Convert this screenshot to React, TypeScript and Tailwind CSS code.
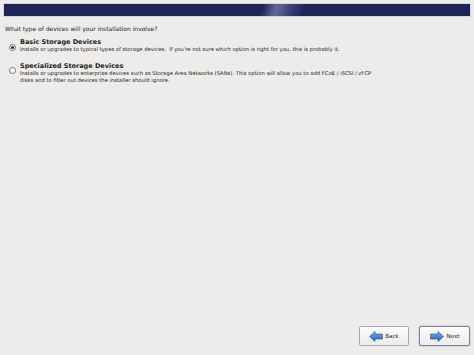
import React from "react";

const Arrow = ({ dir }: { dir: "left" | "right" }) => (
  <svg width="14" height="11" viewBox="0 0 14 11">
    <defs>
      <linearGradient id={"g" + dir} x1="0" y1="0" x2="0" y2="1">
        <stop offset="0" stopColor="#7fb2e8" />
        <stop offset="1" stopColor="#1f5fb0" />
      </linearGradient>
    </defs>
    {dir === "left" ? (
      <path d="M0.5 5.5 L6 0.5 L6 3 L13.5 3 L13.5 8 L6 8 L6 10.5 Z" fill={"url(#g" + dir + ")"} stroke="#1d4f8f" strokeWidth="0.6" />
    ) : (
      <path d="M13.5 5.5 L8 0.5 L8 3 L0.5 3 L0.5 8 L8 8 L8 10.5 Z" fill={"url(#g" + dir + ")"} stroke="#1d4f8f" strokeWidth="0.6" />
    )}
  </svg>
);

export default function App() {
  const f = { fontFamily: '"DejaVu Sans", sans-serif' };
  return (
    <div className="w-[474px] h-[355px] bg-[#edecea] flex flex-col text-[#1a1a1a]" style={f}>
      <div className="mx-[3px] mt-[3px] h-[14px] bg-[#1f2456] border border-[#d5d6e0] relative overflow-hidden">
        <div className="absolute left-[245px] top-0 h-full w-[70px] bg-[linear-gradient(105deg,transparent_20%,rgba(160,170,220,0.5)_38%,rgba(200,205,235,0.35)_45%,rgba(120,130,190,0.3)_58%,transparent_78%)]" />
      </div>
      <div className="px-[5px] pt-[8px] text-[6px] leading-[8px]">What type of devices will your installation involve?</div>
      <div className="flex pl-[9px] pt-[5px]">
        <div className="w-[7px] h-[7px] mt-[6px] rounded-full border border-[#6d6d6d] bg-white flex items-center justify-center">
          <div className="w-[3px] h-[3px] rounded-full bg-[#222]" />
        </div>
        <div className="ml-[4px]">
          <div className="font-bold text-[6.5px] leading-[8px]">Basic Storage Devices</div>
          <div className="text-[5.25px] leading-[7px] whitespace-pre">Installs or upgrades to typical types of storage devices.  If you're not sure which option is right for you, this is probably it.</div>
        </div>
      </div>
      <div className="flex pl-[9px] pt-[9px]">
        <div className="w-[7px] h-[7px] mt-[5px] rounded-full border border-[#6d6d6d] bg-white" />
        <div className="ml-[4px]">
          <div className="font-bold text-[6.5px] leading-[8px]">Specialized Storage Devices</div>
          <div className="text-[5.25px] leading-[7px]">Installs or upgrades to enterprise devices such as Storage Area Networks (SANs). This option will allow you to add FCoE / iSCSI / zFCP</div>
          <div className="text-[5.25px] leading-[7px]">disks and to filter out devices the installer should ignore.</div>
        </div>
      </div>
      <div className="flex-1" />
      <div className="flex justify-end gap-[10px] pr-[4px] pb-[9px]">
        <div className="w-[50px] h-[20px] rounded-[2px] border border-[#a9a9a9] bg-[linear-gradient(#fbfbfb,#ececec)] flex items-center justify-center gap-[2px] text-[5.5px]">
          <Arrow dir="left" />
          <span>Back</span>
        </div>
        <div className="w-[51px] h-[20px] rounded-[2px] border border-[#7d8590] shadow-[0_0_0_0.5px_#b8c0cc] bg-[linear-gradient(#fbfbfb,#ececec)] flex items-center justify-center gap-[3px] text-[5.5px]">
          <Arrow dir="right" />
          <span>Next</span>
        </div>
      </div>
    </div>
  );
}
